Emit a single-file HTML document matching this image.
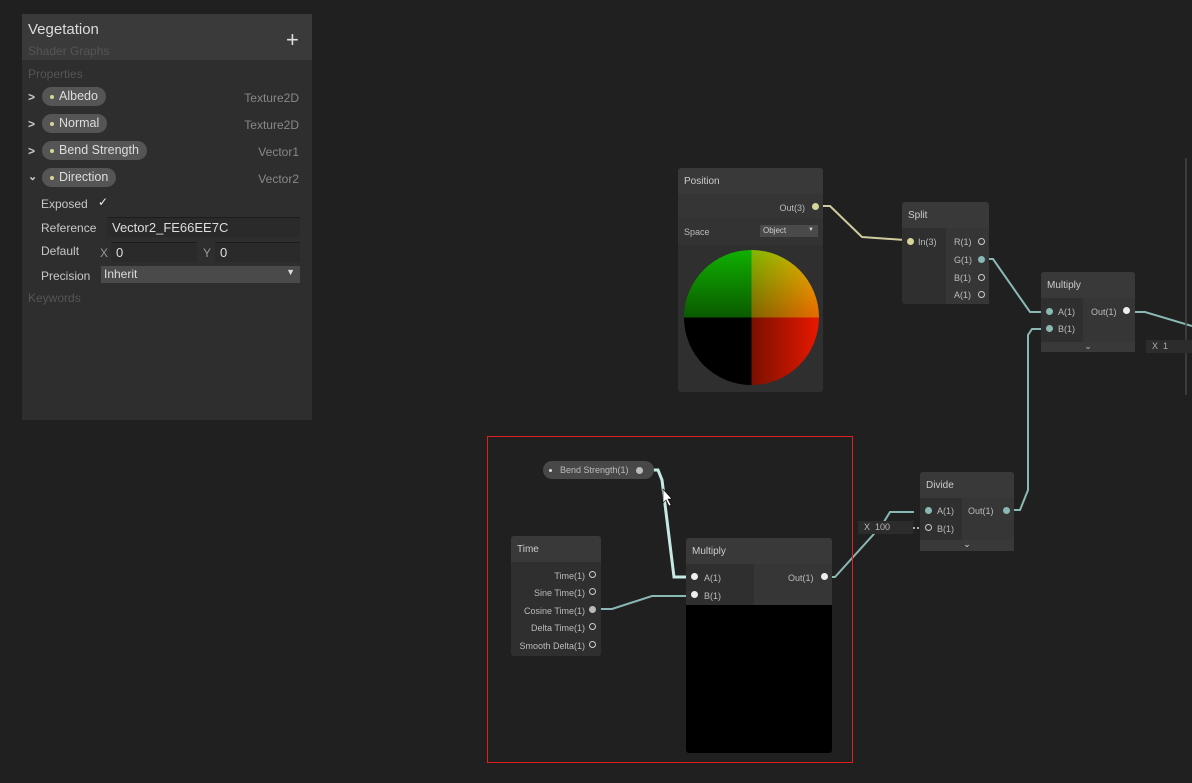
<!DOCTYPE html>
<html><head><meta charset="utf-8"><style>
*{margin:0;padding:0;box-sizing:border-box}
body{width:1192px;height:783px;background:#202020;font-family:"Liberation Sans",sans-serif;position:relative;overflow:hidden;color:#c4c4c4}
.a{position:absolute}
.panel{left:22px;top:14px;width:290px;height:406px;background:#2e2e2e}
.ph{left:0;top:0;width:290px;height:46px;background:#3a3a3a}
.pill{position:absolute;height:19px;border-radius:10px;background:#555;color:#ddd;font-size:12.5px;line-height:19px;padding:0 8px 0 17px}
.pill:before{content:"";position:absolute;left:8px;top:8px;width:4px;height:4px;border-radius:2px;background:#d8d59a}
.arr{position:absolute;left:6px;font-size:12px;color:#ccc;font-weight:bold}
.ty{position:absolute;right:13px;font-size:12px;color:#888}
.lbl{position:absolute;font-size:12px;color:#c8c8c8}
.fld{position:absolute;background:#2a2a2a;border-top:1px solid #1c1c1c;height:20px;font-size:13px;color:#ddd;padding:2px 5px}
.node{position:absolute;background:#2f2f2f;border-radius:3px;font-size:9px;color:#bbb}
.nh{position:absolute;left:0;top:0;right:0;height:26px;background:#393939;padding:8px 6px;font-size:10px;color:#ccc;border-radius:3px 3px 0 0}
.p{position:absolute;width:7px;height:7px;border-radius:50%}
.po{border:1.5px solid #ccc}
.pf{background:#eee}
.pt{background:#8ab8b4}
.t{position:absolute;font-size:9px;color:#bbb;white-space:nowrap}
</style></head><body>
<svg class="a" style="left:0;top:0" width="1192" height="783">
<g fill="none" stroke-width="2">
<path d="M820 206 H830 L862 237 L905 240" stroke="#cfcb9e"/>
<path d="M984 259 H993 L1030 312 H1047" stroke="#8ab8b4"/>
<path d="M1130 312 H1145 L1192 326" stroke="#8ab8b4"/>
<path d="M1008 510 H1020 L1028 490 V335 L1032 329 H1047" stroke="#8ab8b4"/>
<path d="M826 577 H835 L882 525 L890 512 H914" stroke="#8ab8b4"/>
<path d="M640 470 H658 L662 480 L674 577 H692" stroke="#c8e8e4" stroke-width="3"/>
<path d="M596 609 H612 L652 596 H692" stroke="#8ab8b4"/>
<path d="M909 528 H925" stroke="#aaa" stroke-dasharray="2 2"/>
</g>
<rect x="487.5" y="436.5" width="365" height="326" fill="none" stroke="#e02020" stroke-width="1"/>
<path d="M1186 158 V395" stroke="#444" stroke-width="1.5"/>
<path d="M663 489 l0 14 l3 -3 l3 6 l2 -1 l-3 -6 l4 0 z" fill="#fff" stroke="#000" stroke-width="0.6"/>
</svg>

<div class="a panel">
 <div class="a ph"></div>
 <div class="lbl" style="left:6px;top:7px;font-size:15px;color:#ddd">Vegetation</div>
 <div class="lbl" style="left:6px;top:30px;font-size:12px;color:#555">Shader Graphs</div>
 <div class="lbl" style="left:264px;top:13px;font-size:22px;color:#ddd;font-weight:300">+</div>
 <div class="lbl" style="left:6px;top:53px;color:#555">Properties</div>
 <div class="arr" style="top:76px">&gt;</div><div class="pill" style="left:20px;top:73px">Albedo</div><div class="ty" style="top:77px">Texture2D</div>
 <div class="arr" style="top:103px">&gt;</div><div class="pill" style="left:20px;top:100px">Normal</div><div class="ty" style="top:104px">Texture2D</div>
 <div class="arr" style="top:130px">&gt;</div><div class="pill" style="left:20px;top:127px">Bend Strength</div><div class="ty" style="top:131px">Vector1</div>
 <div class="arr" style="top:156px;font-size:11px">&#8964;</div><div class="pill" style="left:20px;top:154px">Direction</div><div class="ty" style="top:158px">Vector2</div>
 <div class="lbl" style="left:19px;top:183px">Exposed</div><div class="lbl" style="left:76px;top:181px;color:#eee">&#10003;</div>
 <div class="lbl" style="left:19px;top:207px">Reference</div><div class="fld" style="left:85px;top:203px;width:193px">Vector2_FE66EE7C</div>
 <div class="lbl" style="left:19px;top:230px">Default</div>
 <div class="lbl" style="left:78px;top:232px;color:#999">X</div><div class="fld" style="left:89px;top:228px;width:86px">0</div>
 <div class="lbl" style="left:181px;top:232px;color:#999">Y</div><div class="fld" style="left:193px;top:228px;width:85px">0</div>
 <div class="lbl" style="left:19px;top:255px">Precision</div>
 <div class="a" style="left:79px;top:252px;width:199px;height:17px;background:#4a4a4a;font-size:12px;color:#ddd;padding:1px 3px">Inherit<span style="position:absolute;right:5px;top:1px;font-size:9px">&#9660;</span></div>
 <div class="lbl" style="left:6px;top:277px;color:#555">Keywords</div>
</div>

<!-- Position -->
<div class="node" style="left:678px;top:168px;width:145px;height:224px">
 <div class="nh">Position</div>
 <div class="a" style="left:0;top:26px;width:145px;height:24px;background:#353535"></div>
 <div class="t" style="right:18px;top:35px">Out(3)</div><div class="p" style="right:4px;top:35px;background:#d8d59a"></div>
 <div class="a" style="left:0;top:50px;width:145px;height:27px;background:#333"></div>
 <div class="t" style="left:6px;top:59px">Space</div>
 <div class="a" style="left:82px;top:57px;width:58px;height:12px;background:#4a4a4a;font-size:8px;padding:1px 3px;color:#ccc">Object<span style="position:absolute;right:4px;font-size:6px;top:2px">&#9660;</span></div>
 <div class="a" style="left:6px;top:82px;width:135px;height:135px;border-radius:50%;background:linear-gradient(to top,#000 50%,#0a5a00 50%,#10b000 100%),linear-gradient(to right,#000 50%,#7a1000 50%,#e81800 100%);background-blend-mode:screen"></div>
</div>

<!-- Split -->
<div class="node" style="left:902px;top:202px;width:87px;height:102px">
 <div class="nh">Split</div>
 <div class="a" style="left:44px;top:26px;width:43px;height:76px;background:#363636"></div>
 <div class="p" style="left:5px;top:36px;background:#d8d59a"></div><div class="t" style="left:16px;top:35px">In(3)</div>
 <div class="t" style="left:52px;top:35px">R(1)</div><div class="p po" style="left:76px;top:36px"></div>
 <div class="t" style="left:52px;top:53px">G(1)</div><div class="p pt" style="left:76px;top:54px"></div>
 <div class="t" style="left:52px;top:71px">B(1)</div><div class="p po" style="left:76px;top:72px"></div>
 <div class="t" style="left:52px;top:88px">A(1)</div><div class="p po" style="left:76px;top:89px"></div>
</div>

<!-- Multiply top -->
<div class="node" style="left:1041px;top:272px;width:94px;height:80px">
 <div class="nh">Multiply</div>
 <div class="a" style="left:42px;top:26px;width:52px;height:44px;background:#363636"></div>
 <div class="a" style="left:0;top:70px;width:94px;height:10px;background:#393939;text-align:center;font-size:9px;line-height:8px">&#8964;</div>
 <div class="p pt" style="left:5px;top:36px"></div><div class="t" style="left:17px;top:35px">A(1)</div>
 <div class="p pt" style="left:5px;top:53px"></div><div class="t" style="left:17px;top:52px">B(1)</div>
 <div class="t" style="left:50px;top:35px">Out(1)</div><div class="p pf" style="left:82px;top:35px"></div>
</div>
<div class="a" style="left:1146px;top:340px;width:46px;height:13px;background:#2c2c2c;font-size:9px;color:#aaa;padding:1px 6px">X&nbsp;&nbsp;1</div>

<!-- Divide -->
<div class="node" style="left:920px;top:472px;width:94px;height:79px">
 <div class="nh">Divide</div>
 <div class="a" style="left:42px;top:26px;width:52px;height:44px;background:#363636"></div>
 <div class="a" style="left:0;top:68px;width:94px;height:11px;background:#393939;text-align:center;font-size:9px;line-height:8px;color:#ddd">&#8964;</div>
 <div class="p pt" style="left:5px;top:35px"></div><div class="t" style="left:17px;top:34px">A(1)</div>
 <div class="p po" style="left:5px;top:52px"></div><div class="t" style="left:17px;top:52px">B(1)</div>
 <div class="t" style="left:48px;top:34px">Out(1)</div><div class="p pt" style="left:83px;top:35px"></div>
</div>
<div class="a" style="left:858px;top:521px;width:55px;height:13px;background:#2c2c2c;font-size:9px;color:#bbb;padding:1px 6px">X&nbsp;&nbsp;100</div>

<!-- Bend Strength pill -->
<div class="a" style="left:543px;top:461px;width:111px;height:18px;border-radius:9px;background:#484848;font-size:9px;color:#bbb;line-height:18px;padding-left:17px">Bend Strength(1)</div>
<div class="a" style="left:549px;top:469px;width:3px;height:3px;background:#ddd;border-radius:2px"></div>
<div class="p" style="left:636px;top:467px;background:#bbb"></div>

<!-- Time -->
<div class="node" style="left:511px;top:536px;width:90px;height:120px">
 <div class="nh">Time</div>
 <div class="t" style="right:16px;top:35px">Time(1)</div><div class="p po" style="right:5px;top:35px"></div>
 <div class="t" style="right:16px;top:52px">Sine Time(1)</div><div class="p po" style="right:5px;top:52px"></div>
 <div class="t" style="right:16px;top:70px">Cosine Time(1)</div><div class="p" style="right:5px;top:70px;background:#bbb"></div>
 <div class="t" style="right:16px;top:87px">Delta Time(1)</div><div class="p po" style="right:5px;top:87px"></div>
 <div class="t" style="right:16px;top:105px">Smooth Delta(1)</div><div class="p po" style="right:5px;top:105px"></div>
</div>

<!-- Multiply bottom -->
<div class="node" style="left:686px;top:538px;width:146px;height:215px">
 <div class="nh">Multiply</div>
 <div class="a" style="left:68px;top:26px;width:78px;height:41px;background:#363636"></div>
 <div class="p pf" style="left:5px;top:35px"></div><div class="t" style="left:18px;top:35px">A(1)</div>
 <div class="p pf" style="left:5px;top:53px"></div><div class="t" style="left:18px;top:53px">B(1)</div>
 <div class="t" style="left:102px;top:35px">Out(1)</div><div class="p pf" style="left:135px;top:35px"></div>
 <div class="a" style="left:0;top:67px;width:146px;height:148px;background:#000;border-radius:0 0 3px 3px"></div>
</div>
</body></html>
